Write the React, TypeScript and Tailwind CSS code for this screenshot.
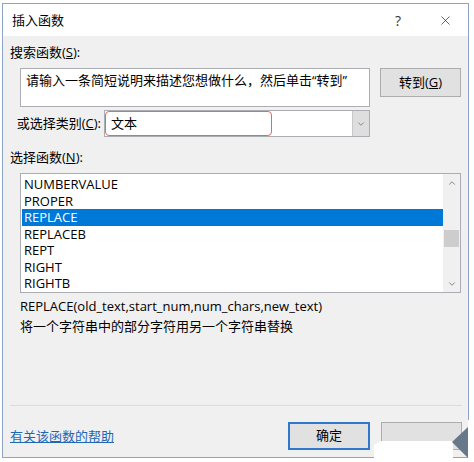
import { ChevronDown, ChevronUp, X } from "lucide-react";

const functions = ["NUMBERVALUE", "PROPER", "REPLACE", "REPLACEB", "REPT", "RIGHT", "RIGHTB"];

export default function App() {
  const selected = "REPLACE";

  return (
    <div className="relative w-[474px] h-[462px] overflow-hidden bg-white text-[13px] text-black font-['Open_Sans','Noto_Sans_CJK_SC',sans-serif]">
      <div className="ml-[2px] mt-[3px] w-[467px] h-[455px] flex flex-col border border-[#8ea4c4] bg-[#f0f0f0]">
        {/* title bar */}
        <div className="h-[32px] flex items-center bg-white pl-[9px] pr-[8px]">
          <span className="leading-[16px]">插入函数</span>
          <span className="ml-auto w-[30px] text-center text-[14px] text-[#333]">?</span>
          <div className="ml-[17px] w-[30px] flex justify-center">
            <X className="w-[15px] h-[15px] text-[#222]" strokeWidth={1.1} />
          </div>
        </div>

        <div className="flex-1 flex flex-col pl-[7px] pr-[6px] pt-[8px]">
          <div className="leading-[16px]">
            搜索函数(<span className="underline">S</span>):
          </div>

          <div className="mt-[8px] flex">
            <div className="ml-[10px] w-[350px] h-[39px] border border-[#abadb3] bg-white px-[5px] pt-[2px] leading-[18px]">
              请输入一条简短说明来描述您想做什么，然后单击“转到”
            </div>
            <button className="ml-[10px] w-[81px] h-[29px] border border-[#adadad] bg-[#e1e1e1]">
              转到(<span className="underline">G</span>)
            </button>
          </div>

          <div className="mt-[3px] h-[27px] flex items-center">
            <div className="w-[94px] flex justify-end pr-[3px]">
              或选择类别(<span className="underline">C</span>):
            </div>
            <div className="w-[266px] h-[27px] flex border border-[#abadb3] bg-white">
              <div className="w-[167px] flex items-center rounded-[4px] border border-[#dc6b6b] pl-[5px]">文本</div>
              <div className="flex-1" />
              <div className="w-[17px] flex items-center justify-center border-l border-[#c8c8c8] bg-[#dedede]">
                <ChevronDown className="w-[10px] h-[10px] text-[#606060]" strokeWidth={1.6} />
              </div>
            </div>
          </div>

          <div className="mt-[12px] leading-[16px]">
            选择函数(<span className="underline">N</span>):
          </div>

          <div className="mt-[8px] ml-[10px] w-[441px] h-[120px] flex border border-[#abadb3] bg-white">
            <div className="flex-1 pt-[2px] pl-[1px]">
              {functions.map((f) => (
                <div
                  key={f}
                  className={
                    f === selected
                      ? "h-[16.5px] leading-[16.5px] pl-[2px] bg-[#0078d7] text-white"
                      : "h-[16.5px] leading-[16.5px] pl-[2px]"
                  }
                >
                  {f}
                </div>
              ))}
            </div>
            <div className="w-[17px] flex flex-col bg-[#f0f0f0]">
              <div className="h-[17px] flex items-center justify-center">
                <ChevronUp className="w-[10px] h-[10px] text-[#606060]" strokeWidth={1.8} />
              </div>
              <div className="flex-1 px-[1px]">
                <div className="mt-[39px] h-[17px] bg-[#cdcdcd]" />
              </div>
              <div className="h-[17px] flex items-center justify-center">
                <ChevronDown className="w-[10px] h-[10px] text-[#606060]" strokeWidth={1.8} />
              </div>
            </div>
          </div>

          <div className="mt-[3px] pl-[10px] leading-[20px]">REPLACE(old_text,start_num,num_chars,new_text)</div>
          <div className="pl-[10px] leading-[20px]">将一个字符串中的部分字符用另一个字符串替换</div>

          <div className="mt-[69px] h-px bg-[#dcdcdc]" />

          <div className="mt-[16px] h-[28px] flex items-center">
            <a className="text-[#1f66b5] underline leading-[16px]" href="#">
              有关该函数的帮助
            </a>
            <button className="ml-auto w-[82px] h-[28px] border-2 border-[#2f78cc] bg-[#e1e1e1]">确定</button>
            <button className="ml-[11px] w-[81px] h-[28px] border border-[#adadad] bg-[#e1e1e1]" />
          </div>
        </div>
      </div>

      {/* torn corner of the capture */}
      <svg className="absolute left-0 top-0 pointer-events-none" width="474" height="462" viewBox="0 0 474 462">
        <polygon points="374,445 381,441 453,441 453,462 374,462" fill="#ffffff" />
        <polygon points="452,442 468,427 468,458" fill="#66788a" />
        <polygon points="468,420 474,420 474,462 468,462" fill="#ffffff" />
      </svg>
    </div>
  );
}
